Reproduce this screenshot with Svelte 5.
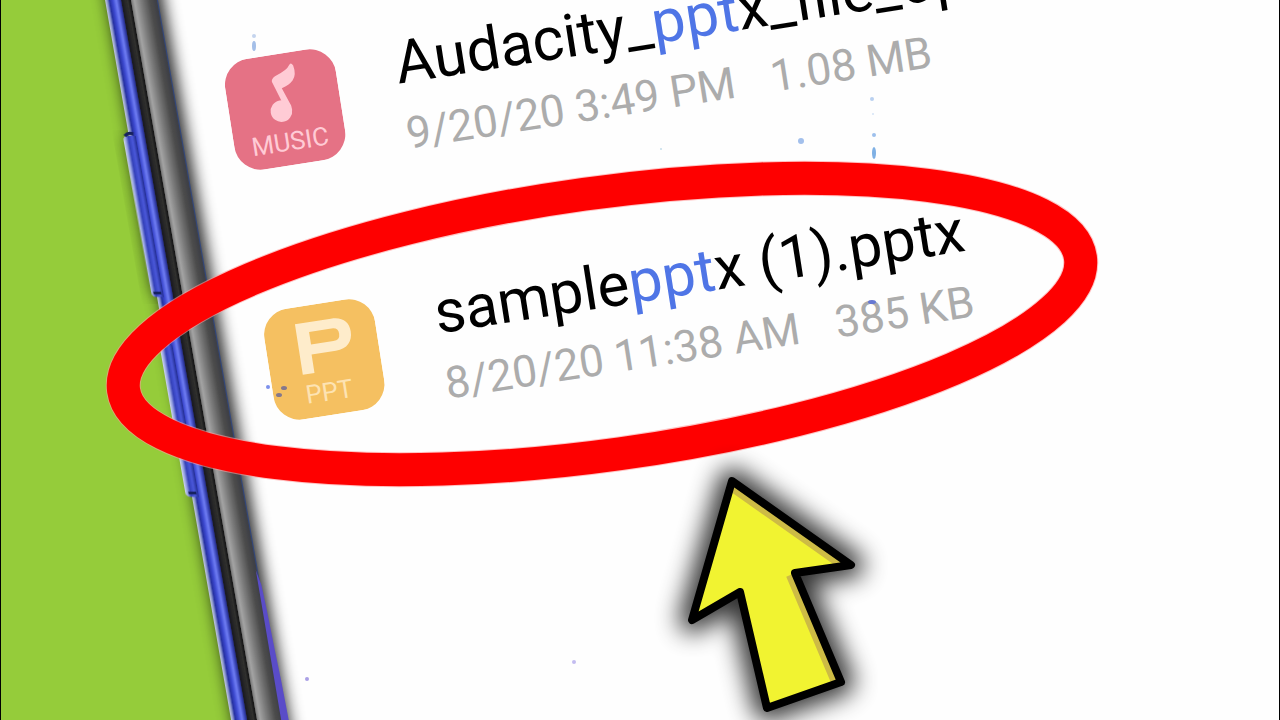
<script>
  const files = [
    { kind: 'music', label: 'MUSIC', before: 'Audacity_', match: 'ppt', after: 'x_file_op', date: '9/20/20 3:49 PM', size: '1.08 MB' },
    { kind: 'ppt', label: 'PPT', before: 'sample', match: 'ppt', after: 'x (1).pptx', date: '8/20/20 11:38 AM', size: '385 KB' }
  ];

  const specks = [
    { x: 254, y: 36, rx: 2, ry: 2, c: '#c4d4ee' },
    { x: 254, y: 46, rx: 2, ry: 5, c: '#a4bfe8' },
    { x: 872, y: 99, rx: 2, ry: 2, c: '#b9d0f0' },
    { x: 873, y: 114, rx: 1, ry: 1, c: '#d4e3f6' },
    { x: 874, y: 135, rx: 2, ry: 2, c: '#9dc0ec' },
    { x: 874, y: 153, rx: 2, ry: 6, c: '#7fb0e4' },
    { x: 801, y: 141, rx: 3, ry: 3, c: '#a3c0ec' },
    { x: 661, y: 149, rx: 1, ry: 1, c: '#c4dcea' },
    { x: 268, y: 387, rx: 2, ry: 2, c: '#7d90ec' },
    { x: 284, y: 388, rx: 3, ry: 2, c: '#85788c' },
    { x: 279, y: 395, rx: 3, ry: 2, c: '#85788c' },
    { x: 872, y: 302, rx: 4, ry: 2, c: '#6678d4' },
    { x: 307, y: 679, rx: 2, ry: 2, c: '#aaa0e6' },
    { x: 574, y: 662, rx: 2, ry: 2, c: '#c3bcf0' }
  ];
</script>

<main>
  <svg class="layer" aria-hidden="true">
    <defs>
      <linearGradient id="blue">
        <stop offset="0" stop-color="#c3c9dc" />
        <stop offset=".12" stop-color="#8d98cf" />
        <stop offset=".24" stop-color="#2530a0" />
        <stop offset=".42" stop-color="#3d4ad0" />
        <stop offset=".62" stop-color="#6f7df4" />
        <stop offset=".8" stop-color="#3540b0" />
        <stop offset="1" stop-color="#15184a" />
      </linearGradient>
      <linearGradient id="key">
        <stop offset="0" stop-color="#d2d8ee" />
        <stop offset=".2" stop-color="#8f9ce0" />
        <stop offset=".4" stop-color="#3340b8" />
        <stop offset=".7" stop-color="#4a58da" />
        <stop offset="1" stop-color="#222c90" />
      </linearGradient>
      <linearGradient id="black">
        <stop offset="0" stop-color="#1a1a20" />
        <stop offset=".6" stop-color="#30302e" />
        <stop offset="1" stop-color="#080808" />
      </linearGradient>
      <linearGradient id="steel">
        <stop offset="0" stop-color="#777" />
        <stop offset=".12" stop-color="#a4a4a4" />
        <stop offset=".4" stop-color="#777" />
        <stop offset=".7" stop-color="#4c4c4c" />
        <stop offset=".94" stop-color="#3d3f44" />
        <stop offset="1" stop-color="#2c4a94" />
      </linearGradient>
      <filter id="edge" x="-100%" y="-5%" width="300%" height="110%">
        <feGaussianBlur stdDeviation="8" />
      </filter>
      <filter id="soft"><feGaussianBlur stdDeviation="0.6" /></filter>
    </defs>
    <polygon points="0,0 110,0 240,720 240,1400 0,1400" fill="#95cc3a" />
    <g transform="skewX(9.93)">
      <rect x="108" y="-40" width="55" height="1500" fill="#000" opacity=".85" filter="url(#edge)" />
      <rect x="101" y="138" width="12" height="158" fill="#000" opacity=".5" filter="url(#edge)" />
      <g filter="url(#soft)">
        <rect x="105" y="-20" width="18" height="1500" fill="url(#blue)" />
        <path d="M99 141q0-5 5-5h8v161h-8q-4 0-4-5z" fill="url(#key)" />
        <path d="M99 345h13v152h-8q-5 0-5-5z" fill="url(#key)" />
        <path d="M101 136q4-4 9-2M102 293h8M102 493h8" fill="none" stroke="#18205f" stroke-width="3" />
        <rect x="121" y="-20" width="11" height="1500" fill="url(#black)" />
        <rect x="131" y="-20" width="27" height="1500" fill="url(#steel)" />
      </g>
      <path d="M156 570l3 15 1 25 1 40 1 30 1 60h-8z" fill="#5a4cc8" />
    </g>
  </svg>

  <ul class="files">
    {#each files as file}
      <li>
        <svg class="icon" viewBox="0 0 114 114" aria-hidden="true">
          <rect class={file.kind} width="114" height="114" rx="27" />
          {#if file.kind === 'music'}
            <g class="note">
              <circle cx="53" cy="58" r="11" />
              <path d="M48 27Q48 24 52 22Q65 18 68 13Q70 10 72 14Q74 24 69 29Q65 33 57 35L64 55L56 52Z" />
            </g>
          {:else}
            <path class="letter" fill-rule="evenodd" d="M33 17H70C82 17 88 23 88 33S82 50 70 50H45V69H33ZM46 27V40H69Q76 40 76 33.500T69 27Z" />
          {/if}
          <text class="{file.kind}-label" x="57" y="99" text-anchor="middle">{file.label}</text>
        </svg>
        <div class="info">
          <span class="name">{file.before}<mark>{file.match}</mark>{file.after}</span>
          <span class="meta"><span>{file.date}</span><span>{file.size}</span></span>
        </div>
      </li>
    {/each}
  </ul>

  <svg class="layer" aria-hidden="true">
    <defs>
      <filter id="glow" x="-40%" y="-40%" width="180%" height="180%">
        <feGaussianBlur stdDeviation="12" />
      </filter>
      <filter id="dot" x="-50%" y="-50%" width="200%" height="200%"><feGaussianBlur stdDeviation="0.7" /></filter>
      <clipPath id="arrow-clip">
        <path d="M732 481L851 565L795 573L841 682L767 708L740 592L692 620Z" />
      </clipPath>
    </defs>
    {#each specks as s}
      <ellipse cx={s.x} cy={s.y} rx={s.rx} ry={s.ry} fill={s.c} filter="url(#dot)" />
    {/each}
    <ellipse cx="602" cy="324" rx="483" ry="131" transform="rotate(-7.9 602 324)" fill="none" stroke="#f99" stroke-width="35" opacity=".6" />
    <ellipse cx="602" cy="324" rx="483" ry="131" transform="rotate(-7.9 602 324)" fill="none" stroke="#fe0000" stroke-width="33" />
    <path d="M732 481L851 565L795 573L841 682L767 708L740 592L692 620Z" stroke="#000" stroke-width="26" stroke-linejoin="round" opacity=".8" filter="url(#glow)" />
    <path d="M732 481L851 565L795 573L841 682L767 708L740 592L692 620Z" fill="#f1f331" />
    <path d="M732 481L851 565M795 573L841 682" clip-path="url(#arrow-clip)" fill="none" stroke="#cdbb45" stroke-width="19" />
    <path d="M732 481L851 565L795 573L841 682L767 708L740 592L692 620Z" fill="none" stroke="#000" stroke-width="8" stroke-linejoin="round" />
  </svg>
</main>

<style>
  :global(body) {
    margin: 0;
    background: #fefefe;
  }
  main {
    position: relative;
    box-sizing: border-box;
    min-height: 100vh;
    padding: 49px 0 0 219px;
    overflow: hidden;
    background: #fefefe;
    font-family: Roboto, sans-serif;
  }
  main::after {
    content: '';
    position: absolute;
    inset: 0;
    border: solid #000;
    border-width: 0 1px;
    pointer-events: none;
  }
  .layer {
    position: absolute;
    inset: 0;
    width: 100%;
    height: 100%;
    pointer-events: none;
  }
  .files {
    position: relative;
    display: flex;
    flex-direction: column;
    gap: 114px;
    margin: 0;
    padding: 0;
    list-style: none;
    transform: rotate(-8.9deg);
    transform-origin: 0 0;
  }
  li {
    display: flex;
    align-items: center;
    gap: 60px;
  }
  .icon {
    flex: none;
    width: 112px;
    height: 112px;
  }
  .music {
    fill: #e57285;
  }
  .ppt {
    fill: #f5c061;
  }
  .note {
    fill: #ffcbd5;
  }
  .letter {
    fill: #feeccb;
  }
  text {
    font-size: 26px;
  }
  .music-label {
    fill: #ffcbd5;
  }
  .ppt-label {
    fill: #fde3b3;
  }
  .info {
    display: flex;
    flex-direction: column;
    gap: 9px;
    padding-top: 6px;
    white-space: nowrap;
  }
  .name {
    color: #000;
    font-size: 60px;
    line-height: 72px;
  }
  mark {
    background: none;
    color: #4f75e6;
  }
  .meta {
    display: flex;
    gap: 36px;
    color: #acacac;
    font-size: 44px;
    line-height: 52px;
  }
</style>
